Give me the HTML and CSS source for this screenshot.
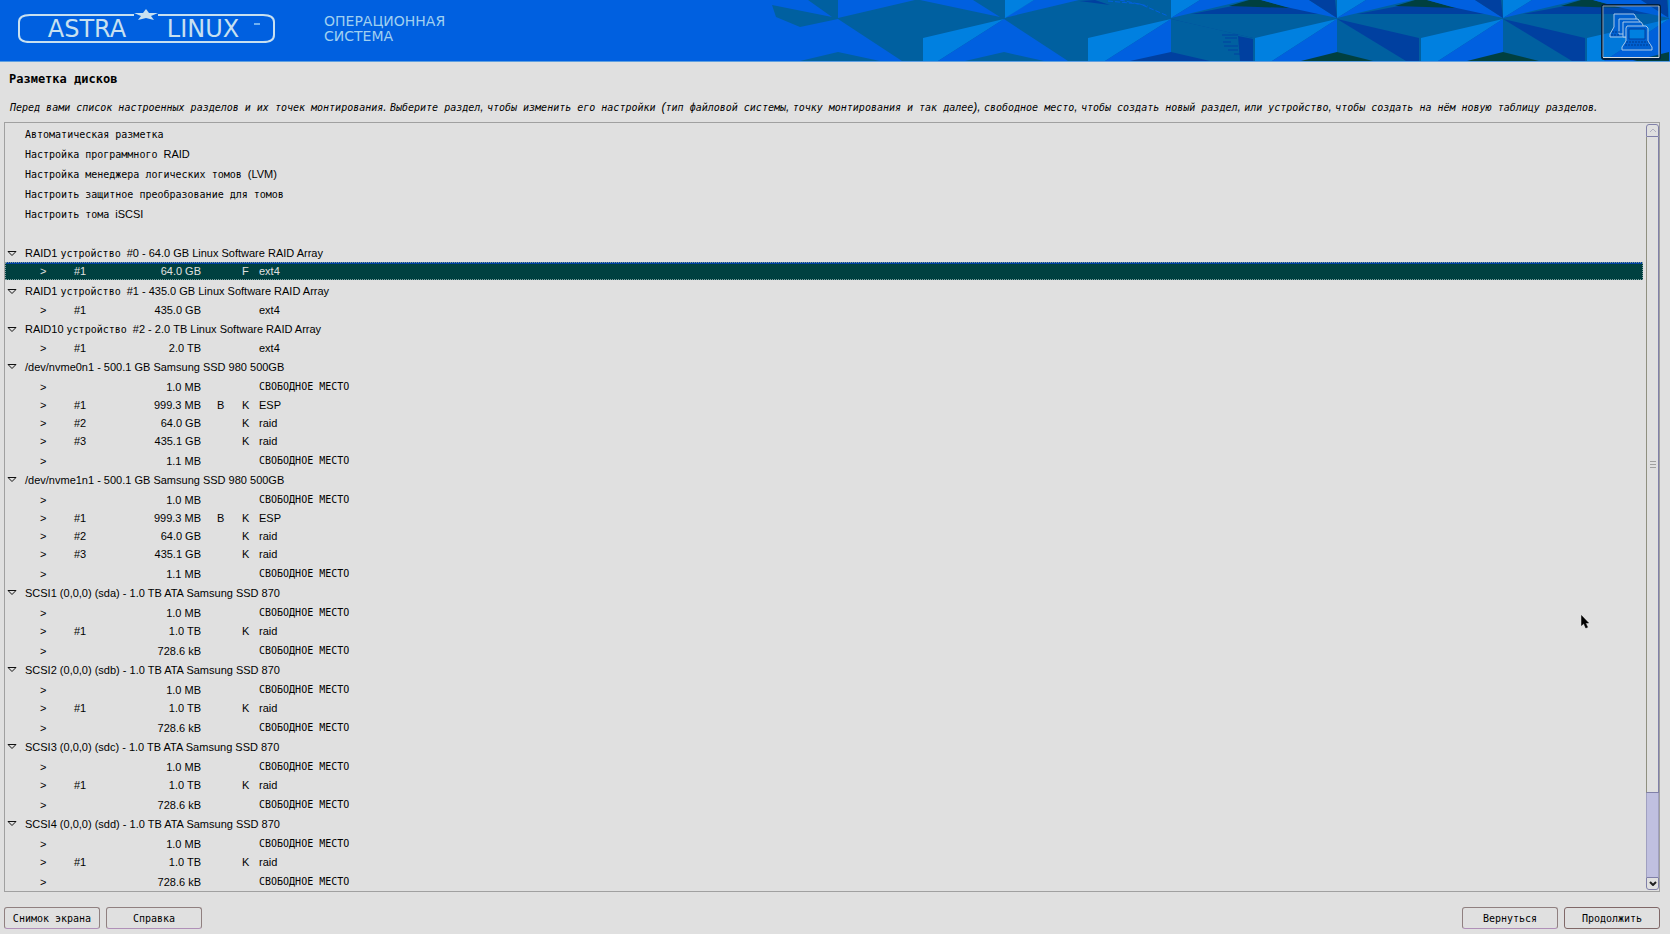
FILE: index.html
```html
<!DOCTYPE html>
<html lang="ru">
<head>
    <meta charset="UTF-8">
    <meta name="viewport" content="width=device-width, initial-scale=1.0">
    <title>Разметка дисков</title>
    <link rel="stylesheet" href="styles.css">
</head>
<body>
    <header class="banner">
        <svg class="logo" width="560" height="61" viewBox="0 0 560 61" role="img" aria-label="Astra Linux">
            <path d="M134 15H30Q19 15 19 22V35Q19 42 30 42H263Q274 42 274 35V22Q274 15 263 15H158" fill="none" stroke="#c8e0f0" stroke-width="2"/>
            <path d="M146 9l3 4h9l-7 3 3 4-8-2-8 2 3-4-7-3h9z" fill="#c8e0f0"/>
            <text class="logo-name" x="87" y="37" text-anchor="middle">ASTRA</text>
            <text class="logo-name" x="203" y="37" text-anchor="middle">LINUX</text>
            <path d="M254 24h6" stroke="#70b0f0" stroke-width="2"/>
            <text class="logo-sub" x="324" y="26">ОПЕРАЦИОННАЯ</text>
            <text class="logo-sub" x="324" y="41">СИСТЕМА</text>
        </svg>
        <svg class="pattern" width="910" height="61" viewBox="760 0 910 61" aria-hidden="true">
            <defs>
                <g id="tile">
                    <path d="M0 0H166V61H0z" fill="#0060a0"/>
                    <path d="M0 0H29L0 18z" fill="#0080e0"/>
                    <path d="M29 0H75L0 18z" fill="#0060e0"/>
                    <path d="M62 6L20 14H152L115 6z" fill="#0040a0"/>
                    <path d="M58 6L78 0H90L120 8z" fill="#004040"/>
                    <path d="M90 0H138L166 18L115 7z" fill="#0060e0"/>
                    <path d="M138 0H164L166 18z" fill="#0040a0"/>
                    <path d="M0 19L82 38V61H69z" fill="#0040a0"/>
                    <path d="M166 19L84 38V61H101z" fill="#0080e0"/>
                    <path d="M166 19L101 61H166z" fill="#0060e0"/>
                    <path d="M166 52L130 61H166zM0 52V61H36z" fill="#004040"/>
                </g>
            </defs>
            <path d="M838 0H1171V61H902L838 19L800 27L776 17L772 5L832 17L808 0z" fill="#0060a0"/>
            <path d="M838 0H915L838 18zM973 0L1000 17L920 0zM1034 0H1079L1004 18z" fill="#0060e0"/>
            <path d="M1005 0H1034L1005 18zM1004 19L923 38V61H938zM1171 19L1088 38V61H1105z" fill="#0080e0"/>
            <path d="M1004 19L938 61H1068zM1171 19L1105 61H1171z" fill="#0060e0"/>
            <path d="M800 61L838 52L880 61zM965 61L1004 52L1044 61z" fill="#0060a0"/>
            <path d="M1079 1L1110 5L1095 0z" fill="#0040a0"/>
            <path d="M1108 1L1140 4L1168 16M1120 0L1148 6" fill="none" stroke="#0060e0" stroke-dasharray="5 2"/>
            <use href="#tile" x="1171"/>
            <path d="M1171 19L1215 29L1253 38V61H1171z" fill="#0060a0"/>
            <path d="M1238 36L1253 39V61H1240z" fill="#0040a0"/>
            <path d="M1222 35h16M1225 38h12M1223 42h8M1224 46h14M1228 50h10M1234 54h6" stroke="#0040a0"/>
            <path d="M1130 61L1171 52L1210 61z" fill="#0040a0"/>
            <use href="#tile" x="1337"/>
            <use href="#tile" x="1503"/>
            <path d="M1669 0V18" stroke="#0080e0"/>
        </svg>
        <svg class="screens" width="60" height="56" viewBox="0 0 60 56" role="img" aria-label="Компьютеры">
            <rect x="1" y="1" width="58" height="54" rx="2" fill="#0060c8" fill-opacity=".25" stroke="#002040" stroke-width="2"/>
            <path d="M2 53V2H58" fill="none" stroke="#909aa6" stroke-width="1"/>
            <path d="M2 53.5H58V2" fill="none" stroke="#d8dce0" stroke-width="1"/>
            <g stroke="#a8c8e8" fill="#0060d0">
                <path d="M13 10h20l2 3v16l5 4H9v-3l4-7z"/>
                <path d="M18 15h19l2 3v12H18z"/>
                <path d="M22 18h18l2 3v12H22z"/>
                <path d="M26 22h19l2 2v13l4 6v3H21v-3l4-6V24z"/>
            </g>
            <path d="M28 25h16v10H28z" fill="#0080e0" stroke="#0040a0"/>
            <path d="M25 38h22M24 41h25M11 28h9M10 31h9" stroke="#003c90" stroke-dasharray="2 1"/>
        </svg>
    </header>

    <main class="partman">
        <h1>Разметка дисков</h1>
        <p class="intro ru">Перед вами список настроенных разделов и их точек монтирования<i>. </i>Выберите раздел<i>, </i>чтобы изменить его настройки <i>(</i>тип файловой системы<i>, </i>точку монтирования и так далее<i>), </i>свободное место<i>, </i>чтобы создать новый раздел<i>, </i>или устройство<i>, </i>чтобы создать на нём новую таблицу разделов<i>.</i></p>

        <div class="list">
            <div class="view">
                <table>
                    <colgroup>
                        <col class="c-arrow"><col class="c-mark"><col class="c-num"><col class="c-size"><col class="c-boot"><col class="c-flag"><col>
                    </colgroup>
                    <tbody>
                        <tr class="tall"><td></td><td colspan="6"><span class="ru">Автоматическая разметка</span></td></tr>
                        <tr class="tall"><td></td><td colspan="6"><span class="ru">Настройка программного </span>RAID</td></tr>
                        <tr class="tall"><td></td><td colspan="6"><span class="ru">Настройка менеджера логических томов </span>(LVM)</td></tr>
                        <tr class="tall"><td></td><td colspan="6"><span class="ru">Настроить защитное преобразование для томов</span></td></tr>
                        <tr class="tall"><td></td><td colspan="6"><span class="ru">Настроить тома </span>iSCSI</td></tr>
                        <tr class="disk"><td colspan="7"></td></tr>
                    </tbody>
                    <tbody>
                        <tr class="tall"><td><svg class="tri" viewBox="0 0 10 6"><path d="M1 .5h8l-4 4z"/></svg></td><td colspan="6">RAID1 <span class="ru">устройство </span>#0 - 64.0 GB Linux Software RAID Array</td></tr>
                        <tr class="selected"><td></td><td>&gt;</td><td>#1</td><td>64.0 GB</td><td></td><td>F</td><td>ext4</td></tr>
                        <tr class="tall"><td><svg class="tri" viewBox="0 0 10 6"><path d="M1 .5h8l-4 4z"/></svg></td><td colspan="6">RAID1 <span class="ru">устройство </span>#1 - 435.0 GB Linux Software RAID Array</td></tr>
                        <tr><td></td><td>&gt;</td><td>#1</td><td>435.0 GB</td><td></td><td></td><td>ext4</td></tr>
                        <tr class="tall"><td><svg class="tri" viewBox="0 0 10 6"><path d="M1 .5h8l-4 4z"/></svg></td><td colspan="6">RAID10 <span class="ru">устройство </span>#2 - 2.0 TB Linux Software RAID Array</td></tr>
                        <tr><td></td><td>&gt;</td><td>#1</td><td>2.0 TB</td><td></td><td></td><td>ext4</td></tr>
                    </tbody>
                    <tbody>
                        <tr class="disk"><td><svg class="tri" viewBox="0 0 10 6"><path d="M1 .5h8l-4 4z"/></svg></td><td colspan="6">/dev/nvme0n1 - 500.1 GB Samsung SSD 980 500GB</td></tr>
                        <tr class="tall"><td></td><td>&gt;</td><td></td><td>1.0 MB</td><td></td><td></td><td class="ru">СВОБОДНОЕ МЕСТО</td></tr>
                        <tr><td></td><td>&gt;</td><td>#1</td><td>999.3 MB</td><td>B</td><td>K</td><td>ESP</td></tr>
                        <tr><td></td><td>&gt;</td><td>#2</td><td>64.0 GB</td><td></td><td>K</td><td>raid</td></tr>
                        <tr><td></td><td>&gt;</td><td>#3</td><td>435.1 GB</td><td></td><td>K</td><td>raid</td></tr>
                        <tr class="tall"><td></td><td>&gt;</td><td></td><td>1.1 MB</td><td></td><td></td><td class="ru">СВОБОДНОЕ МЕСТО</td></tr>
                    </tbody>
                    <tbody>
                        <tr class="disk"><td><svg class="tri" viewBox="0 0 10 6"><path d="M1 .5h8l-4 4z"/></svg></td><td colspan="6">/dev/nvme1n1 - 500.1 GB Samsung SSD 980 500GB</td></tr>
                        <tr class="tall"><td></td><td>&gt;</td><td></td><td>1.0 MB</td><td></td><td></td><td class="ru">СВОБОДНОЕ МЕСТО</td></tr>
                        <tr><td></td><td>&gt;</td><td>#1</td><td>999.3 MB</td><td>B</td><td>K</td><td>ESP</td></tr>
                        <tr><td></td><td>&gt;</td><td>#2</td><td>64.0 GB</td><td></td><td>K</td><td>raid</td></tr>
                        <tr><td></td><td>&gt;</td><td>#3</td><td>435.1 GB</td><td></td><td>K</td><td>raid</td></tr>
                        <tr class="tall"><td></td><td>&gt;</td><td></td><td>1.1 MB</td><td></td><td></td><td class="ru">СВОБОДНОЕ МЕСТО</td></tr>
                    </tbody>
                    <tbody>
                        <tr class="disk"><td><svg class="tri" viewBox="0 0 10 6"><path d="M1 .5h8l-4 4z"/></svg></td><td colspan="6">SCSI1 (0,0,0) (sda) - 1.0 TB ATA Samsung SSD 870</td></tr>
                        <tr class="tall"><td></td><td>&gt;</td><td></td><td>1.0 MB</td><td></td><td></td><td class="ru">СВОБОДНОЕ МЕСТО</td></tr>
                        <tr><td></td><td>&gt;</td><td>#1</td><td>1.0 TB</td><td></td><td>K</td><td>raid</td></tr>
                        <tr class="tall"><td></td><td>&gt;</td><td></td><td>728.6 kB</td><td></td><td></td><td class="ru">СВОБОДНОЕ МЕСТО</td></tr>
                    </tbody>
                    <tbody>
                        <tr class="disk"><td><svg class="tri" viewBox="0 0 10 6"><path d="M1 .5h8l-4 4z"/></svg></td><td colspan="6">SCSI2 (0,0,0) (sdb) - 1.0 TB ATA Samsung SSD 870</td></tr>
                        <tr class="tall"><td></td><td>&gt;</td><td></td><td>1.0 MB</td><td></td><td></td><td class="ru">СВОБОДНОЕ МЕСТО</td></tr>
                        <tr><td></td><td>&gt;</td><td>#1</td><td>1.0 TB</td><td></td><td>K</td><td>raid</td></tr>
                        <tr class="tall"><td></td><td>&gt;</td><td></td><td>728.6 kB</td><td></td><td></td><td class="ru">СВОБОДНОЕ МЕСТО</td></tr>
                    </tbody>
                    <tbody>
                        <tr class="disk"><td><svg class="tri" viewBox="0 0 10 6"><path d="M1 .5h8l-4 4z"/></svg></td><td colspan="6">SCSI3 (0,0,0) (sdc) - 1.0 TB ATA Samsung SSD 870</td></tr>
                        <tr class="tall"><td></td><td>&gt;</td><td></td><td>1.0 MB</td><td></td><td></td><td class="ru">СВОБОДНОЕ МЕСТО</td></tr>
                        <tr><td></td><td>&gt;</td><td>#1</td><td>1.0 TB</td><td></td><td>K</td><td>raid</td></tr>
                        <tr class="tall"><td></td><td>&gt;</td><td></td><td>728.6 kB</td><td></td><td></td><td class="ru">СВОБОДНОЕ МЕСТО</td></tr>
                    </tbody>
                    <tbody>
                        <tr class="disk"><td><svg class="tri" viewBox="0 0 10 6"><path d="M1 .5h8l-4 4z"/></svg></td><td colspan="6">SCSI4 (0,0,0) (sdd) - 1.0 TB ATA Samsung SSD 870</td></tr>
                        <tr class="tall"><td></td><td>&gt;</td><td></td><td>1.0 MB</td><td></td><td></td><td class="ru">СВОБОДНОЕ МЕСТО</td></tr>
                        <tr><td></td><td>&gt;</td><td>#1</td><td>1.0 TB</td><td></td><td>K</td><td>raid</td></tr>
                        <tr class="tall"><td></td><td>&gt;</td><td></td><td>728.6 kB</td><td></td><td></td><td class="ru">СВОБОДНОЕ МЕСТО</td></tr>
                    </tbody>
                </table>
            </div>
            <div class="scrollbar">
                <button class="step up" aria-label="Вверх"><svg width="8" height="5" viewBox="0 0 8 5"><path d="M1 4l3-3 3 3" fill="none" stroke="#b0b0c0"/></svg></button>
                <div class="thumb"><span class="grip"></span></div>
                <div class="trough"></div>
                <button class="step down" aria-label="Вниз"><svg width="8" height="5" viewBox="0 0 8 5"><path d="M1 1l3 3 3-3" fill="none" stroke="#202020" stroke-width="2"/></svg></button>
            </div>
        </div>
    </main>

    <footer class="actions">
        <button class="btn ru">Снимок экрана</button>
        <button class="btn ru">Справка</button>
        <button class="btn ru push">Вернуться</button>
        <button class="btn ru default">Продолжить</button>
    </footer>

    <svg class="pointer" width="9" height="14" viewBox="0 0 9 14" aria-hidden="true"><path d="M.5 .5v10l2.300-2 2 4.500 1.800-.8-2-4.200h3z" fill="#000" stroke="#000" stroke-width=".5"/></svg>
</body>
</html>
```
FILE: styles.css
```css
* {
    box-sizing: border-box;
}
body {
    margin: 0;
    height: 100vh;
    display: flex;
    flex-direction: column;
    overflow: hidden;
    background-color: #e0e0e0;
    color: #000;
    font-family: "Liberation Sans", Arial, sans-serif;
    font-size: 11px;
}
.ru {
    font-family: "DejaVu Sans Mono", monospace;
    font-size: 10px;
}

/* banner */
.banner {
    position: relative;
    display: flex;
    justify-content: space-between;
    flex: none;
    height: 62px;
    overflow: hidden;
    background-color: #0060e0;
    border-bottom: 1px solid #60a0e0;
}
.banner svg {
    flex: none;
}
.logo-name {
    font-family: "DejaVu Sans", sans-serif;
    font-size: 24px;
    fill: #c8e0f0;
}
.logo-sub {
    font-family: "DejaVu Sans", sans-serif;
    font-size: 14px;
    fill: #a0d0f0;
}
.screens {
    position: absolute;
    top: 4px;
    right: 9px;
}

/* partition list */
.partman {
    flex: 1;
    min-height: 0;
    display: flex;
    flex-direction: column;
    padding: 0 10px 0 4px;
}
h1 {
    margin: 8px 0 0 5px;
    font-family: "DejaVu Sans Mono", monospace;
    font-size: 12px;
    line-height: 18px;
}
.intro {
    margin: 9px 0 0 6px;
    height: 25px;
    line-height: 20px;
    font-style: italic;
    white-space: nowrap;
}
.intro i {
    font-family: "Liberation Sans", Arial, sans-serif;
    font-size: 12px;
    white-space: pre;
}
.list {
    flex: 1;
    min-height: 0;
    display: flex;
    border: 1px solid #a0a0a0;
}
.view {
    flex: 1;
    overflow: hidden;
    padding-right: 3px;
}
table {
    width: 100%;
    table-layout: fixed;
    border-collapse: collapse;
}
.c-arrow { width: 20px; }
.c-mark { width: 49px; }
.c-num { width: 47px; }
.c-size { width: 80px; }
.c-boot { width: 41px; }
.c-flag { width: 17px; }
td {
    height: 18px;
    padding: 2px 0 0;
    line-height: 16px;
    white-space: pre;
    vertical-align: middle;
}
.disk td {
    height: 19px;
    padding-top: 2px;
}
.tall td {
    height: 20px;
    padding-top: 3px;
}
.tall td.ru {
    padding-top: 4px;
}
td:nth-child(2):not([colspan]) {
    padding-left: 15px;
}
td:nth-child(4) {
    text-align: right;
}
td:nth-child(5) {
    padding-left: 16px;
}
.selected {
    background-color: #004040;
    color: #e0e0e0;
    outline: 1px dotted #80a0a0;
    outline-offset: -1px;
    box-shadow: inset 0 2px #0040a0;
}
.selected td {
    padding-top: 0;
}
.tri {
    display: block;
    width: 10px;
    height: 6px;
    margin-left: 2px;
    fill: none;
    stroke: #101010;
}

/* scrollbar */
.scrollbar {
    display: flex;
    flex-direction: column;
    width: 13px;
    padding: 1px 0;
}
.step {
    display: flex;
    align-items: center;
    justify-content: center;
    height: 13px;
    padding: 0;
    background-color: #e0e0e0;
    border: 1px solid #8080a8;
}
.up {
    border-radius: 3px 3px 0 0;
}
.down {
    border-radius: 0 0 3px 3px;
}
.thumb {
    flex: 658;
    display: flex;
    align-items: center;
    justify-content: center;
    border: 1px solid #8080a8;
    border-left-color: #909080;
    border-top: 0;
}
.grip {
    width: 6px;
    height: 7px;
    border-top: 1px solid #a0a0a0;
    border-bottom: 1px solid #a0a0a0;
    background: linear-gradient(#a0a0a0, #a0a0a0) center / 100% 1px no-repeat;
}
.trough {
    flex: 84;
    background-color: #c0c0e0;
    border: 0 solid #a0a0c0;
    border-width: 0 1px;
}

/* bottom buttons */
.actions {
    flex: none;
    display: flex;
    gap: 6px;
    padding: 15px 10px 5px 4px;
}
.btn {
    width: 96px;
    height: 22px;
    padding: 0;
    color: #000;
    background-color: #e0e0e0;
    border: 1px solid #908080;
    border-bottom-color: #b090b8;
    border-radius: 3px;
}
.push {
    margin-left: auto;
}
.default {
    border-color: #806868;
}

.pointer {
    position: absolute;
    left: 1581px;
    top: 615px;
}
```
